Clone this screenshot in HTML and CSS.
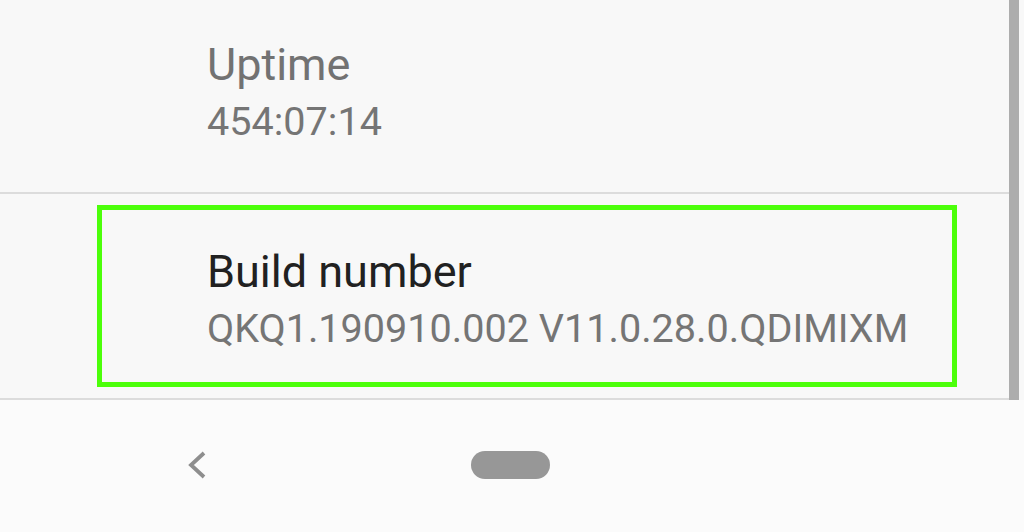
FILE: index.html
```html
<!DOCTYPE html>
<html lang="en">
    <head>
        <meta charset="UTF-8">
        <meta name="viewport" content="width=device-width, initial-scale=1.0">
        <title>About phone</title>
        <link rel="stylesheet" href="styles.css">
    </head>
    <body>
        <div class="screen">
            <div class="content">
                <div class="list">
                    <div class="row row-uptime">
                        <div class="title muted">Uptime</div>
                        <div class="summary">454:07:14</div>
                    </div>
                    <div class="divider"></div>
                    <div class="row row-build">
                        <div class="highlight">
                            <div class="title">Build number</div>
                            <div class="summary">QKQ1.190910.002 V11.0.28.0.QDIMIXM</div>
                        </div>
                    </div>
                    <div class="divider"></div>
                </div>
                <div class="scrollbar"></div>
            </div>

            <!-- navigation bar -->
            <div class="navbar">
                <svg class="nav-back" width="20" height="28" viewBox="0 0 20 28">
                    <polyline points="17,2 4,14 17,26" fill="none" stroke="#8e8e8e" stroke-width="3.8" stroke-linecap="butt" stroke-linejoin="miter"/>
                </svg>
                <div class="nav-home"></div>
            </div>
        </div>
    </body>
</html>
```

FILE: styles.css
```css
body {
    margin: 0;
    font-family: Roboto, "Noto Sans", sans-serif;
    background-color: #f8f8f8;
}

.screen {
    width: 1024px;
    height: 532px;
    display: flex;
    flex-direction: column;
    overflow: hidden;
}

.content {
    display: flex;
    background-color: #f8f8f8;
}

.list {
    width: 1009px;
}

.scrollbar {
    width: 10px;
    background-color: #adadad;
}

.row-uptime {
    height: 192px;
    box-sizing: border-box;
    padding: 39px 0 0 207px;
}

.row-build {
    padding: 11px 0;
}

.highlight {
    width: 860px;
    margin-left: 97px;
    box-sizing: border-box;
    border: 5px solid #4cff0a;
    padding: 36px 0 30px 105px;
}

.title {
    font-size: 45px;
    line-height: 52px;
    color: #212121;
}

.title.muted {
    color: #727272;
}

.summary {
    margin-top: 8px;
    font-size: 39.6px;
    line-height: 46px;
    color: #757575;
}

.divider {
    height: 2px;
    background-color: #dcdcdc;
}

.navbar {
    flex: 1;
    display: flex;
    align-items: center;
    background-color: #fbfbfb;
    padding-left: 187px;
    padding-bottom: 3px;
}

.nav-back {
    display: block;
}

.nav-home {
    width: 79px;
    height: 28px;
    margin-left: 264px;
    border-radius: 14px;
    background-color: #979797;
}
```
